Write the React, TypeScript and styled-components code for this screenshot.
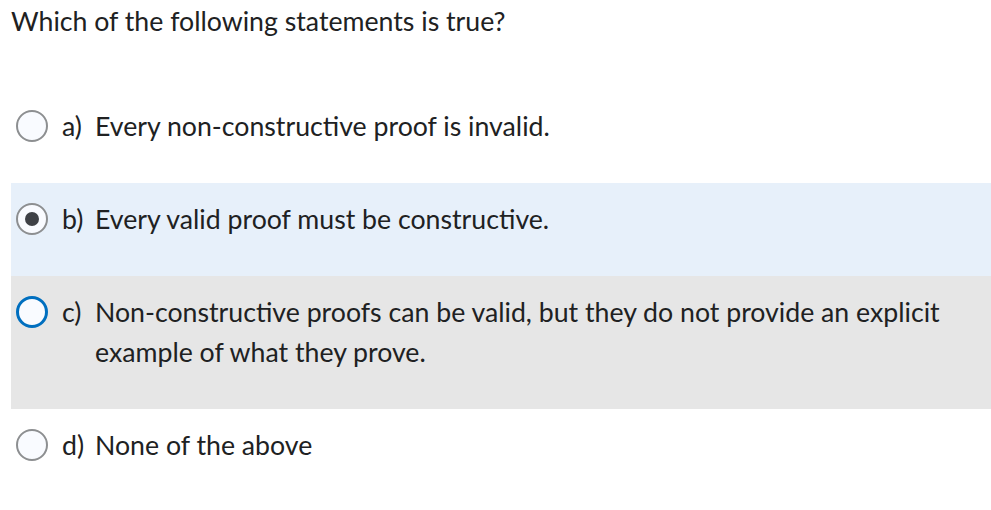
import React from "react";
import styled, { createGlobalStyle, css } from "styled-components";

const Global = createGlobalStyle`
  html, body { margin: 0; padding: 0; background: #ffffff; }
  body { font-family: Lato, "Noto Sans", sans-serif; color: #202122; }
`;

const Page = styled.div`
  padding: 0 0 0 11px;
  width: 991px;
  box-sizing: border-box;
`;

const Question = styled.div`
  font-size: 26.7px;
  line-height: 42px;
  margin-bottom: 48px;
`;

const List = styled.div`
  display: flex;
  flex-direction: column;
`;

type Tone = "plain" | "selected" | "hover";

const Row = styled.div<{ $tone: Tone }>`
  display: flex;
  align-items: flex-start;
  padding: 16px 30px 37px 5px;
  background: ${(p) =>
    p.$tone === "selected" ? "#e7f0fa" : p.$tone === "hover" ? "#e6e6e6" : "transparent"};
  font-size: 26.7px;
  line-height: 40px;
`;

const Radio = styled.span<{ $tone: Tone; $checked: boolean }>`
  flex: none;
  width: 32px;
  height: 32px;
  margin-top: 4px;
  border-radius: 50%;
  box-sizing: border-box;
  background: #f9fbff;
  border: 2px solid #8d8f91;
  display: flex;
  align-items: center;
  justify-content: center;
  ${(p) =>
    p.$tone === "hover" &&
    css`
      border: 3px solid #006fbf;
    `}
  &::after {
    content: "";
    display: ${(p) => (p.$checked ? "block" : "none")};
    width: 14px;
    height: 14px;
    border-radius: 50%;
    background: #3e4146;
  }
`;

const Letter = styled.span`
  flex: none;
  width: 33px;
  margin-left: 14px;
`;

const Text = styled.span`
  flex: 1;
`;

const options: { letter: string; text: string; tone: Tone; checked: boolean }[] = [
  { letter: "a)", text: "Every non-constructive proof is invalid.", tone: "plain", checked: false },
  { letter: "b)", text: "Every valid proof must be constructive.", tone: "selected", checked: true },
  {
    letter: "c)",
    text: "Non-constructive proofs can be valid, but they do not provide an explicit example of what they prove.",
    tone: "hover",
    checked: false,
  },
  { letter: "d)", text: "None of the above", tone: "plain", checked: false },
];

export default function App() {
  return (
    <>
      <Global />
      <Page>
        <Question>Which of the following statements is true?</Question>
        <List>
          {options.map((o) => (
            <Row key={o.letter} $tone={o.tone}>
              <Radio $tone={o.tone} $checked={o.checked} />
              <Letter>{o.letter}</Letter>
              <Text>{o.text}</Text>
            </Row>
          ))}
        </List>
      </Page>
    </>
  );
}
